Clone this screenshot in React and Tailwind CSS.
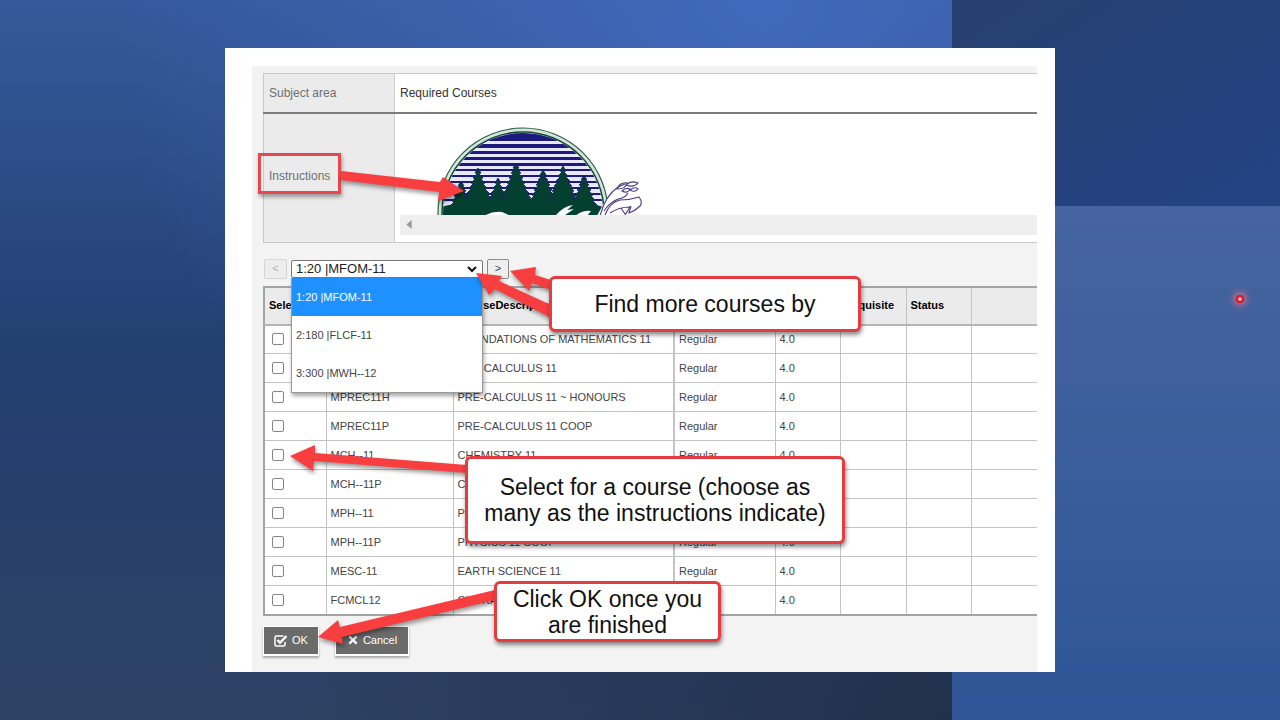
import { useState } from "react";
import { FaTimes } from "react-icons/fa";

const AREAS = ["1:20 |MFOM-11", "2:180 |FLCF-11", "3:300 |MWH--12"];

const COLUMNS = ["Select", "Course", "CourseDescription", "Type", "Credits", "Requisite", "Status", ""];

const COURSES = [
  { code: "MFOM-11", name: "FOUNDATIONS OF MATHEMATICS 11" },
  { code: "MPREC11", name: "PRE-CALCULUS 11" },
  { code: "MPREC11H", name: "PRE-CALCULUS 11 ~ HONOURS" },
  { code: "MPREC11P", name: "PRE-CALCULUS 11 COOP" },
  { code: "MCH--11", name: "CHEMISTRY 11" },
  { code: "MCH--11P", name: "CHEMISTRY 11 COOP" },
  { code: "MPH--11", name: "PHYSICS 11" },
  { code: "MPH--11P", name: "PHYSICS 11 COOP" },
  { code: "MESC-11", name: "EARTH SCIENCE 11" },
  { code: "FCMCL12", name: "CHORAL MUSIC 12" },
];

// x and top of each fir in the crest
const TREES = [
  [461, 181],
  [478, 168],
  [498, 178],
  [516, 163],
  [543, 170],
  [563, 166],
  [584, 175],
];

function firPath(x, top) {
  let left = "";
  let right = "";
  let y = top;
  let w = 1;
  while (y < 212) {
    y += 5;
    w += 2;
    right += `L${x + w} ${y} L${x + w - 2} ${y + 1} `;
    left = `L${x - w + 2} ${y + 1} L${x - w} ${y} ` + left;
  }
  return `M${x} ${top} ${right} L${x + w} 218 L${x - w} 218 ${left}Z`;
}

function Backdrop() {
  return (
    <div className="absolute inset-0 -z-10 flex">
      <div className="relative flex-[952] bg-linear-to-b from-[#35599b] via-[#223f70] to-[#2e4264]">
        <div className="absolute inset-0 bg-[radial-gradient(ellipse_at_80%_0%,#4169bb_0%,transparent_60%)]" />
        <div className="absolute inset-0 bg-[radial-gradient(ellipse_at_100%_100%,#22304d_0%,transparent_50%)]" />
      </div>
      <div className="flex flex-[328] flex-col">
        <div className="h-[206px] bg-linear-to-br from-[#26406f] to-[#234384]" />
        <div className="flex-1 bg-linear-to-b from-[#4665a0] to-[#2f5596]" />
      </div>
    </div>
  );
}

function Crest() {
  return (
    <svg viewBox="400 114 260 101" className="block h-[101px] w-[260px]">
      <defs>
        <clipPath id="sky">
          <circle cx="523" cy="213" r="80" />
        </clipPath>
      </defs>
      <circle cx="523" cy="213" r="85" fill="#d5e6d8" stroke="#2f5e49" strokeWidth="1.2" />
      <circle cx="523" cy="213" r="81" fill="#e9e8fa" stroke="#164a38" strokeWidth="1.5" />
      <g clipPath="url(#sky)">
        <path
          fill="#1c1a7c"
          d="M440 130h170v11H440zM440 144h170v4H440zM440 151h170v3H440zM440 157h170v3H440zM440 163h170v3H440zM440 169h170v2H440zM440 175h170v2H440zM440 181h170v2H440zM440 187h170v2H440zM440 193h170v2H440zM440 199h170v2H440z"
        />
        <g fill="#04402f" stroke="#1c1a7c" strokeWidth="0.8">
          {TREES.map(([x, top]) => (
            <path key={x} d={firPath(x, top)} />
          ))}
        </g>
        <path fill="#04402f" d="M440 218v-11l14-3 10-5h28l12 4 8-3h44l12 3 12-3 14 4 12 4v10z" />
        <path fill="#fff" d="M484 216q8-5 18-4l9 4zM556 215q8-9 17-10l-6 5 7-1-9 6zM575 216q8-6 16-5l-4 5z" />
      </g>
      <path fill="#fff" d="M597 216q10-22 24-30l-8 30z" />
      <g fill="none" stroke="#443b86" strokeWidth="1.1">
        <path d="M600 216q5-20 18-29l7-3" />
        <path d="M617 189q3-7 10-6-1 6-10 6zM626 185q5-5 12-2-4 5-12 2zM622 191q4-4 8-2-2 5-8 2zM630 190q5-4 8-1-3 4-8 1z" />
        <path d="M605 215q5-13 15-15 10 0 19-3 4 5 1 9-5 5-11 7l2-7M604 211q5-8 14-12 7-1 10-6" />
        <path d="M610 213q9-6 20-6l-5 8M621 208l4 6" />
      </g>
    </svg>
  );
}

function CheckIcon() {
  return (
    <svg viewBox="0 0 14 13" className="h-[13px] w-[14px]" fill="none" stroke="#fff">
      <path d="M11 8v2.500q0 1.500-1.500 1.500h-7q-1.500 0-1.500-1.500v-7q0-1.500 1.500-1.500h7" strokeWidth="1.5" />
      <path d="M3.500 6l2.500 2.800L12.500 2" strokeWidth="2.400" />
    </svg>
  );
}

function AreaSummary() {
  return (
    <table className="w-full border-collapse border border-r-0 border-[#c9c9c9] bg-white text-left text-[12px]">
      <tbody>
        <tr className="h-[39px] border-b-2 border-[#7c7c7c]">
          <th scope="row" className="w-[131px] border-r border-[#cfcfcf] bg-[#ebebeb] px-[5px] font-normal text-[#707070]">
            Subject area
          </th>
          <td className="px-[5px] text-[#333]">Required Courses</td>
        </tr>
        <tr>
          <th scope="row" className="border-r border-[#cfcfcf] bg-[#ebebeb] px-[5px] pb-1 font-normal text-[#707070]">
            Instructions
          </th>
          <td className="pb-[7px] pl-[5px]">
            <Crest />
            <div className="flex h-5 items-center bg-[#efefef] pl-[6px]">
              <svg viewBox="0 0 6 10" className="h-[9px] w-[6px]">
                <path d="M6 0v10L0 5z" fill="#9a9a9a" />
              </svg>
            </div>
          </td>
        </tr>
      </tbody>
    </table>
  );
}

function AreaPicker() {
  const [area, setArea] = useState(AREAS[0]);

  return (
    <div className="flex h-5 items-center gap-1 text-[11px]">
      <button disabled aria-label="Previous area" className="h-5 w-[23px] rounded-xs border border-[#d4d4d4] bg-[#ededed] text-[#b0b0b0]">
        &lt;
      </button>
      <div className="relative w-[192px]">
        <select
          aria-label="Subject area"
          value={area}
          onChange={(e) => setArea(e.target.value)}
          className="block h-[18px] w-full appearance-none rounded-xs border border-[#767676] bg-white px-1 text-[13px] leading-4 text-[#222]"
        >
          {AREAS.map((a) => (
            <option key={a}>{a}</option>
          ))}
        </select>
        <svg viewBox="0 0 10 7" className="pointer-events-none absolute top-[6px] right-[6px] h-[7px] w-[10px]">
          <path d="M1 1l4 4 4-4" fill="none" stroke="#111" strokeWidth="2" />
        </svg>
        <ul
          role="listbox"
          aria-label="Areas"
          className="absolute top-full left-0 z-10 w-full border border-t-0 border-[#999] bg-white shadow-[1px_3px_4px_rgba(0,0,0,0.35)]"
        >
          {AREAS.map((a) => (
            <li
              key={a}
              role="option"
              aria-selected={a === area}
              onClick={() => setArea(a)}
              className={`px-1 py-[11px] leading-4 ${a === area ? "bg-[#1e90ff] text-white" : "text-[#444]"}`}
            >
              {a}
            </li>
          ))}
        </ul>
      </div>
      <button aria-label="Next area" className="h-5 w-[22px] rounded-xs border border-[#8c8c8c] bg-[#efefef] text-[#444]">
        &gt;
      </button>
    </div>
  );
}

function CourseTable() {
  return (
    <table className="w-full table-fixed border-collapse border-y-2 border-l-2 border-[#a3a3a3] bg-white text-left text-[11px] text-[#444]">
      <colgroup>
        <col className="w-[62px]" />
        <col className="w-[127px]" />
        <col className="w-[221px]" />
        <col className="w-[101px]" />
        <col className="w-[65px]" />
        <col className="w-[66px]" />
        <col className="w-[65px]" />
        <col />
      </colgroup>
      <thead>
        <tr className="h-[38px] border-b-2 border-[#b5b5b5] bg-[#ebebeb] text-black">
          {COLUMNS.map((c, i) => (
            <th key={i} scope="col" className="border-l border-[#c4c4c4] px-1 font-bold">
              {c}
            </th>
          ))}
        </tr>
      </thead>
      <tbody>
        {COURSES.map((c) => (
          <tr key={c.code} className="h-[29px] border-b border-[#c4c4c4]">
            <td className="pl-[7px]">
              <input
                type="checkbox"
                aria-label={`Select ${c.code}`}
                className="block size-3 appearance-none rounded-xs border border-[#858585] bg-white checked:bg-[#1e90ff]"
              />
            </td>
            <td className="border-l border-[#c4c4c4] px-1">{c.code}</td>
            <td className="border-l border-[#c4c4c4] px-1">{c.name}</td>
            <td className="border-l-2 border-[#c4c4c4] px-1">Regular</td>
            <td className="border-l border-[#c4c4c4] px-1">4.0</td>
            <td className="border-l border-[#c4c4c4]" />
            <td className="border-l border-[#c4c4c4]" />
            <td className="border-l border-[#c4c4c4]" />
          </tr>
        ))}
      </tbody>
    </table>
  );
}

function Callout({ className, children }) {
  return (
    <div
      className={`absolute z-30 flex items-center justify-center rounded-md border-[3px] border-[#e63b41] bg-white text-center text-[23px] leading-[26px] text-[#111] shadow-[1px_3px_4px_rgba(0,0,0,0.45)] ${className}`}
    >
      {children}
    </div>
  );
}

// arrows share the panel's coordinates, shifted by its place on the slide
function Arrows() {
  return (
    <svg
      viewBox="252 66 785 606"
      className="pointer-events-none absolute top-0 left-0 z-20 h-[606px] w-[785px] drop-shadow-[1px_3px_2px_rgba(0,0,0,0.4)]"
    >
      <g fill="#f93e40">
        <path d="M341 171l99 11 3-5 21 14-26 10 1-9-98-12z" />
        <path d="M510 271l26-4-1 8 16 5v10l-19-7-3 8z" />
        <path d="M476 273l26 3-3 5 52 24v13l-56-29-6 6z" />
        <path d="M290 456l25-11v8l152 12v8l-153-12-1 10z" />
        <path d="M318 637l20-17 2 7 155-37v10l-153 37 1 7z" />
      </g>
    </svg>
  );
}

export default function App() {
  return (
    <main className="relative isolate flex min-h-screen flex-col overflow-hidden px-[225px] py-12 font-['Liberation_Sans',Arial,sans-serif]">
      <Backdrop />

      <div className="flex flex-1 flex-col bg-white pt-[18px] pr-[18px] pl-[27px]">
        <section className="relative flex-1 bg-[#f3f3f3] pt-[7px] pl-[11px]">
          <AreaSummary />
          <div className="mt-4 mb-[7px] pl-px">
            <AreaPicker />
          </div>
          <CourseTable />

          <div className="mt-[10px] flex gap-4 pb-3 text-[11px] text-white">
            <button className="flex h-[30px] w-[56px] items-center justify-center gap-1 border border-b-2 border-white bg-[#6b6b6b] shadow-[0_2px_2px_rgba(0,0,0,0.3)]">
              <CheckIcon />
              OK
            </button>
            <button className="flex h-[30px] w-[74px] items-center justify-center gap-1 border border-b-2 border-white bg-[#6b6b6b] shadow-[0_2px_2px_rgba(0,0,0,0.3)]">
              <FaTimes className="size-3" />
              Cancel
            </button>
          </div>

          {/* Annotations */}
          <div className="absolute top-[87px] left-[6px] z-20 h-[41px] w-[83px] border-[3px] border-[#e6484d] shadow-[1px_3px_4px_rgba(0,0,0,0.35)]" />
          <Arrows />
          <Callout className="top-[210px] left-[297px] h-[56px] w-[312px]">Find more courses by</Callout>
          <Callout className="top-[390px] left-[213px] h-[88px] w-[380px]">
            Select for a course (choose as
            <br />
            many as the instructions indicate)
          </Callout>
          <Callout className="top-[515px] left-[242px] h-[61px] w-[227px]">
            Click OK once you
            <br />
            are finished
          </Callout>
        </section>
      </div>

      {/* Laser pointer */}
      <div className="absolute top-[295px] left-[1236px] size-2 rounded-full border-2 border-[#e0101c] bg-[#ffb9b9] shadow-[0_0_6px_3px_rgba(240,110,130,0.7)]" />
    </main>
  );
}
